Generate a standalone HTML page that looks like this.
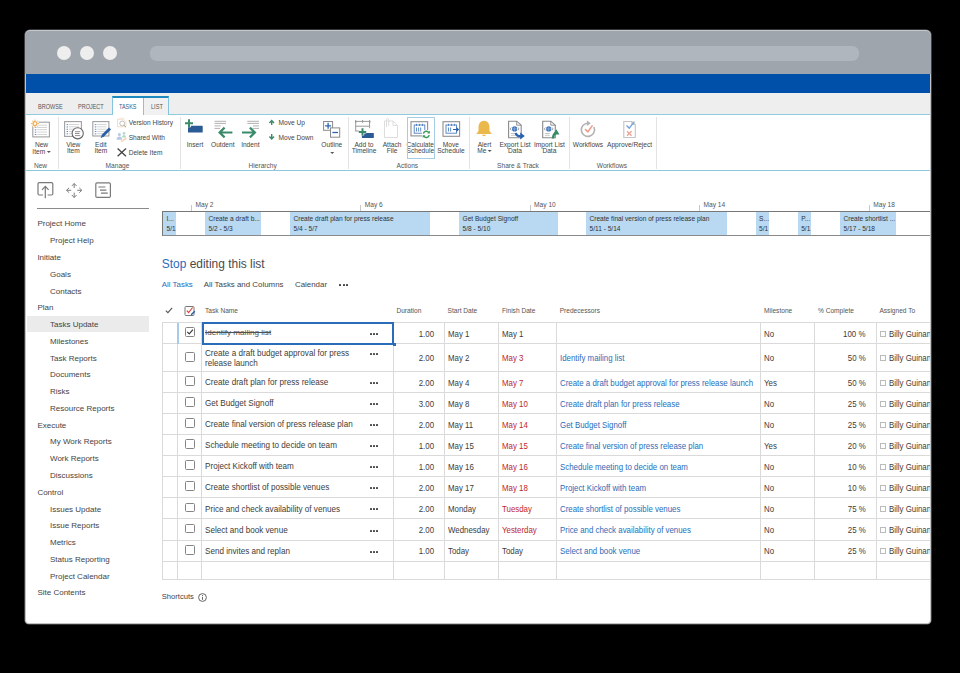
<!DOCTYPE html>
<html><head><meta charset="utf-8">
<style>
html,body{margin:0;padding:0;}
body{width:960px;height:673px;background:#000;position:relative;overflow:hidden;font-family:"Liberation Sans",sans-serif;}
.t{position:absolute;white-space:nowrap;line-height:1.117;}
.r{position:absolute;}
svg{position:absolute;overflow:visible;}
</style></head><body>

<div class="r" style="left:25px;top:30px;width:906px;height:594px;background:#ffffff;border-radius:5px 5px 4px 4px;"></div>
<div style="position:absolute;left:0;top:0;width:931px;height:673px;overflow:hidden;">
<div class="r" style="left:25px;top:30px;width:906px;height:44px;background:#9fa5ac;border-radius:5px 5px 0 0;box-shadow:inset 0 1px 0 #c4c8cc;"></div>
<div class="r" style="left:57px;top:46px;width:14px;height:14px;background:#eeeeee;border-radius:50%;"></div>
<div class="r" style="left:80px;top:46px;width:14px;height:14px;background:#eeeeee;border-radius:50%;"></div>
<div class="r" style="left:103px;top:46px;width:14px;height:14px;background:#eeeeee;border-radius:50%;"></div>
<div class="r" style="left:150.3px;top:45.6px;width:708.7px;height:15.3px;background:#afb6bd;border-radius:6.5px;"></div>
<div class="r" style="left:25px;top:74px;width:906px;height:19px;background:#004fa9;"></div>
<div class="r" style="left:25px;top:93px;width:906px;height:21px;background:#eeeeee;"></div>
<div class="r" style="left:25px;top:114px;width:906px;height:1px;background:#92cbe0;"></div>
<div class="r" style="left:25px;top:170px;width:906px;height:1.2px;background:#8fc8dd;"></div>
<div class="r" style="left:112px;top:95.5px;width:57px;height:19px;background:#f1f1f1;box-sizing:border-box;border:1px solid #86c3df;border-top:2px solid #1e88bf;border-bottom:none;"></div>
<div class="r" style="left:113px;top:97.5px;width:30px;height:18px;background:#ffffff;"></div>
<div class="r" style="left:143px;top:97.5px;width:1px;height:17px;background:#86c3df;"></div>
<div class="t" style="left:37.5px;top:103.18px;font-size:7.2px;color:#555;transform:scaleX(0.77);transform-origin:0 0;">BROWSE</div>
<div class="t" style="left:77.8px;top:103.18px;font-size:7.2px;color:#555;transform:scaleX(0.765);transform-origin:0 0;">PROJECT</div>
<div class="t" style="left:118.8px;top:103.18px;font-size:7.2px;color:#2b5f86;transform:scaleX(0.755);transform-origin:0 0;">TASKS</div>
<div class="t" style="left:150.5px;top:103.18px;font-size:7.2px;color:#555;transform:scaleX(0.78);transform-origin:0 0;">LIST</div>
<div class="r" style="left:57.5px;top:117px;width:1px;height:52px;background:#e3e3e3;"></div>
<div class="r" style="left:179.5px;top:117px;width:1px;height:52px;background:#e3e3e3;"></div>
<div class="r" style="left:347.5px;top:117px;width:1px;height:52px;background:#e3e3e3;"></div>
<div class="r" style="left:468.5px;top:117px;width:1px;height:52px;background:#e3e3e3;"></div>
<div class="r" style="left:568.5px;top:117px;width:1px;height:52px;background:#e3e3e3;"></div>
<div class="r" style="left:656px;top:117px;width:1px;height:52px;background:#e3e3e3;"></div>
<div class="t " style="left:40.5px;top:161.61px;font-size:6.6px;color:#555;transform:translateX(-50%);">New</div>
<div class="t " style="left:117.5px;top:161.61px;font-size:6.6px;color:#555;transform:translateX(-50%);">Manage</div>
<div class="t " style="left:262.7px;top:161.61px;font-size:6.6px;color:#555;transform:translateX(-50%);">Hierarchy</div>
<div class="t " style="left:407.3px;top:161.61px;font-size:6.6px;color:#555;transform:translateX(-50%);">Actions</div>
<div class="t " style="left:518px;top:161.61px;font-size:6.6px;color:#555;transform:translateX(-50%);">Share &amp; Track</div>
<div class="t " style="left:612px;top:161.61px;font-size:6.6px;color:#555;transform:translateX(-50%);">Workflows</div>
<div class="t " style="left:41.5px;top:141.31px;font-size:6.6px;color:#444;transform:translateX(-50%);">New</div>
<div class="t " style="left:41.5px;top:147.61px;font-size:6.6px;color:#444;transform:translateX(-50%);">Item<span style="display:inline-block;width:0;height:0;border-left:2px solid transparent;border-right:2px solid transparent;border-top:2.2px solid #555;vertical-align:1px;margin-left:1.5px"></span></div>
<div class="t " style="left:73.3px;top:140.71px;font-size:6.6px;color:#444;transform:translateX(-50%);">View</div>
<div class="t " style="left:73.3px;top:146.91px;font-size:6.6px;color:#444;transform:translateX(-50%);">Item</div>
<div class="t " style="left:100.8px;top:140.71px;font-size:6.6px;color:#444;transform:translateX(-50%);">Edit</div>
<div class="t " style="left:100.8px;top:146.91px;font-size:6.6px;color:#444;transform:translateX(-50%);">Item</div>
<div class="t " style="left:195px;top:140.71px;font-size:6.6px;color:#444;transform:translateX(-50%);">Insert</div>
<div class="t " style="left:222.8px;top:140.71px;font-size:6.6px;color:#444;transform:translateX(-50%);">Outdent</div>
<div class="t " style="left:250.3px;top:140.71px;font-size:6.6px;color:#444;transform:translateX(-50%);">Indent</div>
<div class="t " style="left:331.8px;top:140.51px;font-size:6.6px;color:#444;transform:translateX(-50%);">Outline</div>
<div class="t " style="left:331.8px;top:149.11px;font-size:6.6px;color:#444;transform:translateX(-50%);"><span style="display:inline-block;width:0;height:0;border-left:2px solid transparent;border-right:2px solid transparent;border-top:2.2px solid #555;vertical-align:1px;margin-left:1.5px"></span></div>
<div class="t " style="left:364px;top:140.71px;font-size:6.6px;color:#444;transform:translateX(-50%);">Add to</div>
<div class="t " style="left:364px;top:146.91px;font-size:6.6px;color:#444;transform:translateX(-50%);">Timeline</div>
<div class="t " style="left:392px;top:140.71px;font-size:6.6px;color:#444;transform:translateX(-50%);">Attach</div>
<div class="t " style="left:392px;top:146.91px;font-size:6.6px;color:#444;transform:translateX(-50%);">File</div>
<div class="t " style="left:420.3px;top:140.71px;font-size:6.6px;color:#444;transform:translateX(-50%);">Calculate</div>
<div class="t " style="left:420.3px;top:146.91px;font-size:6.6px;color:#444;transform:translateX(-50%);">Schedule</div>
<div class="t " style="left:450.9px;top:140.71px;font-size:6.6px;color:#444;transform:translateX(-50%);">Move</div>
<div class="t " style="left:450.9px;top:146.91px;font-size:6.6px;color:#444;transform:translateX(-50%);">Schedule</div>
<div class="t " style="left:484.5px;top:140.71px;font-size:6.6px;color:#444;transform:translateX(-50%);">Alert</div>
<div class="t " style="left:484.5px;top:146.91px;font-size:6.6px;color:#444;transform:translateX(-50%);">Me<span style="display:inline-block;width:0;height:0;border-left:2px solid transparent;border-right:2px solid transparent;border-top:2.2px solid #555;vertical-align:1px;margin-left:1.5px"></span></div>
<div class="t " style="left:515px;top:140.71px;font-size:6.6px;color:#444;transform:translateX(-50%);">Export List</div>
<div class="t " style="left:515px;top:146.91px;font-size:6.6px;color:#444;transform:translateX(-50%);">Data</div>
<div class="t " style="left:549.4px;top:140.71px;font-size:6.6px;color:#444;transform:translateX(-50%);">Import List</div>
<div class="t " style="left:549.4px;top:146.91px;font-size:6.6px;color:#444;transform:translateX(-50%);">Data</div>
<div class="t " style="left:588px;top:140.71px;font-size:6.6px;color:#444;transform:translateX(-50%);">Workflows</div>
<div class="t " style="left:629.6px;top:140.71px;font-size:6.6px;color:#444;transform:translateX(-50%);">Approve/Reject</div>
<div class="t " style="left:128.7px;top:118.81px;font-size:6.6px;color:#444;">Version History</div>
<div class="t " style="left:128.7px;top:133.81px;font-size:6.6px;color:#444;">Shared With</div>
<div class="t " style="left:128.7px;top:148.81px;font-size:6.6px;color:#444;">Delete Item</div>
<div class="t " style="left:278.6px;top:119.01px;font-size:6.6px;color:#444;">Move Up</div>
<div class="t " style="left:278.6px;top:133.71px;font-size:6.6px;color:#444;">Move Down</div>
<div class="r" style="left:406.5px;top:116.5px;width:28px;height:42px;background:transparent;box-sizing:border-box;border:1px solid #a6cde6;"></div>
<div class="r" style="left:37px;top:208px;width:112px;height:1px;background:#8a8a8a;"></div>
<div class="r" style="left:27px;top:316px;width:122px;height:16px;background:#ebebeb;"></div>
<div class="t " style="left:37.4px;top:220.43px;font-size:8px;color:#444;">Project Home</div>
<div class="t " style="left:50px;top:237.20px;font-size:8px;color:#444;">Project Help</div>
<div class="t " style="left:37.4px;top:253.97px;font-size:8px;color:#444;">Initiate</div>
<div class="t " style="left:50px;top:270.74px;font-size:8px;color:#444;">Goals</div>
<div class="t " style="left:50px;top:287.51px;font-size:8px;color:#444;">Contacts</div>
<div class="t " style="left:37.4px;top:304.28px;font-size:8px;color:#444;">Plan</div>
<div class="t " style="left:50px;top:321.05px;font-size:8px;color:#444;">Tasks Update</div>
<div class="t " style="left:50px;top:337.82px;font-size:8px;color:#444;">Milestones</div>
<div class="t " style="left:50px;top:354.59px;font-size:8px;color:#444;">Task Reports</div>
<div class="t " style="left:50px;top:371.36px;font-size:8px;color:#444;">Documents</div>
<div class="t " style="left:50px;top:388.13px;font-size:8px;color:#444;">Risks</div>
<div class="t " style="left:50px;top:404.90px;font-size:8px;color:#444;">Resource Reports</div>
<div class="t " style="left:37.4px;top:421.67px;font-size:8px;color:#444;">Execute</div>
<div class="t " style="left:50px;top:438.44px;font-size:8px;color:#444;">My Work Reports</div>
<div class="t " style="left:50px;top:455.21px;font-size:8px;color:#444;">Work Reports</div>
<div class="t " style="left:50px;top:471.98px;font-size:8px;color:#444;">Discussions</div>
<div class="t " style="left:37.4px;top:488.75px;font-size:8px;color:#444;">Control</div>
<div class="t " style="left:50px;top:505.52px;font-size:8px;color:#444;">Issues Update</div>
<div class="t " style="left:50px;top:522.29px;font-size:8px;color:#444;">Issue Reports</div>
<div class="t " style="left:50px;top:539.06px;font-size:8px;color:#444;">Metrics</div>
<div class="t " style="left:50px;top:555.83px;font-size:8px;color:#444;">Status Reporting</div>
<div class="t " style="left:50px;top:572.60px;font-size:8px;color:#444;">Project Calendar</div>
<div class="t " style="left:37.4px;top:589.37px;font-size:8px;color:#444;">Site Contents</div>
<div class="r" style="left:161.5px;top:210.8px;width:770px;height:25.2px;background:#ffffff;box-sizing:border-box;border:1.4px solid #777;border-right:none;border-bottom:1.6px solid #8a8a8a;"></div>
<div class="r" style="left:163px;top:212.2px;width:13px;height:22.8px;background:#b8d9f1;overflow:hidden;"><div class="t" style="left:3.5px;top:3.11px;font-size:6.6px;color:#333;">I...</div><div class="t" style="left:3.5px;top:13.11px;font-size:6.6px;color:#333;">5/1</div></div>
<div class="r" style="left:205px;top:212.2px;width:56px;height:22.8px;background:#b8d9f1;overflow:hidden;"><div class="t" style="left:3.5px;top:3.11px;font-size:6.6px;color:#333;">Create a draft b...</div><div class="t" style="left:3.5px;top:13.11px;font-size:6.6px;color:#333;">5/2 - 5/3</div></div>
<div class="r" style="left:290px;top:212.2px;width:140px;height:22.8px;background:#b8d9f1;overflow:hidden;"><div class="t" style="left:3.5px;top:3.11px;font-size:6.6px;color:#333;">Create draft plan for press release</div><div class="t" style="left:3.5px;top:13.11px;font-size:6.6px;color:#333;">5/4 - 5/7</div></div>
<div class="r" style="left:459px;top:212.2px;width:99px;height:22.8px;background:#b8d9f1;overflow:hidden;"><div class="t" style="left:3.5px;top:3.11px;font-size:6.6px;color:#333;">Get Budget Signoff</div><div class="t" style="left:3.5px;top:13.11px;font-size:6.6px;color:#333;">5/8 - 5/10</div></div>
<div class="r" style="left:586px;top:212.2px;width:141px;height:22.8px;background:#b8d9f1;overflow:hidden;"><div class="t" style="left:3.5px;top:3.11px;font-size:6.6px;color:#333;">Create final version of press release plan</div><div class="t" style="left:3.5px;top:13.11px;font-size:6.6px;color:#333;">5/11 - 5/14</div></div>
<div class="r" style="left:755.6px;top:212.2px;width:13.399999999999977px;height:22.8px;background:#b8d9f1;overflow:hidden;"><div class="t" style="left:3.5px;top:3.11px;font-size:6.6px;color:#333;">S...</div><div class="t" style="left:3.5px;top:13.11px;font-size:6.6px;color:#333;">5/1</div></div>
<div class="r" style="left:797.7px;top:212.2px;width:13.299999999999955px;height:22.8px;background:#b8d9f1;overflow:hidden;"><div class="t" style="left:3.5px;top:3.11px;font-size:6.6px;color:#333;">P...</div><div class="t" style="left:3.5px;top:13.11px;font-size:6.6px;color:#333;">5/1</div></div>
<div class="r" style="left:840px;top:212.2px;width:56px;height:22.8px;background:#b8d9f1;overflow:hidden;"><div class="t" style="left:3.5px;top:3.11px;font-size:6.6px;color:#333;">Create shortlist ...</div><div class="t" style="left:3.5px;top:13.11px;font-size:6.6px;color:#333;">5/17 - 5/18</div></div>
<div class="r" style="left:191px;top:205px;width:1px;height:6px;background:#c8c8c8;"></div>
<div class="t " style="left:195.5px;top:201.01px;font-size:6.6px;color:#555;">May 2</div>
<div class="r" style="left:360.3px;top:205px;width:1px;height:6px;background:#c8c8c8;"></div>
<div class="t " style="left:364.8px;top:201.01px;font-size:6.6px;color:#555;">May 6</div>
<div class="r" style="left:529.6px;top:205px;width:1px;height:6px;background:#c8c8c8;"></div>
<div class="t " style="left:534.1px;top:201.01px;font-size:6.6px;color:#555;">May 10</div>
<div class="r" style="left:699px;top:205px;width:1px;height:6px;background:#c8c8c8;"></div>
<div class="t " style="left:703.5px;top:201.01px;font-size:6.6px;color:#555;">May 14</div>
<div class="r" style="left:868.8px;top:205px;width:1px;height:6px;background:#c8c8c8;"></div>
<div class="t " style="left:873.3px;top:201.01px;font-size:6.6px;color:#555;">May 18</div>
<div class="t " style="left:161.8px;top:258.33px;font-size:11.95px;color:#4a4a4a;"><span style="color:#2a6cb8">Stop</span> editing this list</div>
<div class="t " style="left:161.8px;top:281.19px;font-size:7.9px;color:#2a6cb8;">All Tasks</div>
<div class="t " style="left:203.8px;top:281.19px;font-size:7.9px;color:#444;">All Tasks and Columns</div>
<div class="t " style="left:295px;top:281.19px;font-size:7.9px;color:#444;">Calendar</div>
<div class="r" style="left:339.3px;top:284px;width:2.1px;height:2.1px;background:#444;border-radius:0.6px;"></div>
<div class="r" style="left:342.6px;top:284px;width:2.1px;height:2.1px;background:#444;border-radius:0.6px;"></div>
<div class="r" style="left:345.90000000000003px;top:284px;width:2.1px;height:2.1px;background:#444;border-radius:0.6px;"></div>
<div class="r" style="left:162px;top:322.0px;width:769px;height:1px;background:#dadada;"></div>
<div class="r" style="left:162px;top:343.1px;width:769px;height:1px;background:#dadada;"></div>
<div class="r" style="left:162px;top:370.8px;width:769px;height:1px;background:#dadada;"></div>
<div class="r" style="left:162px;top:391.8px;width:769px;height:1px;background:#dadada;"></div>
<div class="r" style="left:162px;top:412.8px;width:769px;height:1px;background:#dadada;"></div>
<div class="r" style="left:162px;top:433.8px;width:769px;height:1px;background:#dadada;"></div>
<div class="r" style="left:162px;top:454.9px;width:769px;height:1px;background:#dadada;"></div>
<div class="r" style="left:162px;top:476.0px;width:769px;height:1px;background:#dadada;"></div>
<div class="r" style="left:162px;top:497.2px;width:769px;height:1px;background:#dadada;"></div>
<div class="r" style="left:162px;top:518.3px;width:769px;height:1px;background:#dadada;"></div>
<div class="r" style="left:162px;top:539.5px;width:769px;height:1px;background:#dadada;"></div>
<div class="r" style="left:162px;top:560.6px;width:769px;height:1px;background:#dadada;"></div>
<div class="r" style="left:162px;top:578.8px;width:769px;height:1px;background:#dadada;"></div>
<div class="r" style="left:161.5px;top:322px;width:1px;height:257.8px;background:#dadada;"></div>
<div class="r" style="left:177.4px;top:322px;width:1px;height:257.8px;background:#dadada;"></div>
<div class="r" style="left:201.1px;top:322px;width:1px;height:257.8px;background:#dadada;"></div>
<div class="r" style="left:393.3px;top:322px;width:1px;height:257.8px;background:#dadada;"></div>
<div class="r" style="left:443.5px;top:322px;width:1px;height:257.8px;background:#dadada;"></div>
<div class="r" style="left:498.3px;top:322px;width:1px;height:257.8px;background:#dadada;"></div>
<div class="r" style="left:556.0px;top:322px;width:1px;height:257.8px;background:#dadada;"></div>
<div class="r" style="left:760.1px;top:322px;width:1px;height:257.8px;background:#dadada;"></div>
<div class="r" style="left:813.8px;top:322px;width:1px;height:257.8px;background:#dadada;"></div>
<div class="r" style="left:875.8px;top:322px;width:1px;height:257.8px;background:#dadada;"></div>
<svg style="left:165px;top:307px" width="8" height="7" viewBox="0 0 8 7"><path d="M0.8 3.6L2.9 5.7L7.2 0.9" fill="none" stroke="#555" stroke-width="1.1"/></svg>
<svg style="left:184px;top:304.5px" width="12" height="12" viewBox="0 0 12 12"><rect x="1" y="1.5" width="9" height="9" rx="1" fill="#fff" stroke="#777" stroke-width="1"/><path d="M2.8 5.6L4.6 7.5L8.6 2.5" fill="none" stroke="#e0463c" stroke-width="1.2"/><path d="M6.5 10.8L7.2 8.8L10.3 5.7L11.3 6.7L8.2 9.8Z" fill="#2b5fa8"/></svg>
<div class="t " style="left:205px;top:307.01px;font-size:6.6px;color:#555;">Task Name</div>
<div class="t " style="left:396.4px;top:307.01px;font-size:6.6px;color:#555;">Duration</div>
<div class="t " style="left:447.6px;top:307.01px;font-size:6.6px;color:#555;">Start Date</div>
<div class="t " style="left:502px;top:307.01px;font-size:6.6px;color:#555;">Finish Date</div>
<div class="t " style="left:559.7px;top:307.01px;font-size:6.6px;color:#555;">Predecessors</div>
<div class="t " style="left:764px;top:307.01px;font-size:6.6px;color:#555;">Milestone</div>
<div class="t " style="left:818px;top:307.01px;font-size:6.6px;color:#555;">% Complete</div>
<div class="t " style="left:879.4px;top:307.01px;font-size:6.6px;color:#555;">Assigned To</div>
<div class="t " style="left:205px;top:328.08px;font-size:8.1px;color:#505050;text-decoration:line-through;">Identify mailing list</div>
<div class="r" style="left:370px;top:333px;width:1.8px;height:1.8px;background:#4a4a4a;border-radius:0.5px;"></div>
<div class="r" style="left:373px;top:333px;width:1.8px;height:1.8px;background:#4a4a4a;border-radius:0.5px;"></div>
<div class="r" style="left:376px;top:333px;width:1.8px;height:1.8px;background:#4a4a4a;border-radius:0.5px;"></div>
<div class="t " style="right:497.2px;top:329.94px;font-size:8.25px;color:#3c3c3c;transform:scaleX(0.955);transform-origin:100% 0;">1.00</div>
<div class="t " style="left:447.6px;top:329.94px;font-size:8.25px;color:#3c3c3c;transform:scaleX(0.955);transform-origin:0 0;">May 1</div>
<div class="t " style="left:502px;top:329.94px;font-size:8.25px;color:#3c3c3c;transform:scaleX(0.955);transform-origin:0 0;">May 1</div>
<div class="t " style="left:764px;top:329.94px;font-size:8.25px;color:#3c3c3c;transform:scaleX(0.955);transform-origin:0 0;">No</div>
<div class="t " style="right:65.29999999999995px;top:329.94px;font-size:8.25px;color:#3c3c3c;transform:scaleX(0.955);transform-origin:100% 0;">100 %</div>
<div class="r" style="left:880px;top:330.95px;width:6px;height:6px;background:#fff;box-sizing:border-box;border:1px solid #bbb;"></div>
<div class="t " style="left:889px;top:329.94px;font-size:8.25px;color:#3c3c3c;transform:scaleX(0.955);transform-origin:0 0;">Billy Guinan</div>
<div class="r" style="left:185px;top:327.35px;width:10px;height:9.8px;background:#fff;box-sizing:border-box;border:1.2px solid #858585;border-radius:1.5px;"></div>
<div class="t " style="left:205px;top:349.49px;font-size:8.25px;color:#3c3c3c;transform:scaleX(0.985);transform-origin:0 0;">Create a draft budget approval for press</div>
<div class="t " style="left:205px;top:359.49px;font-size:8.25px;color:#3c3c3c;transform:scaleX(0.985);transform-origin:0 0;">release launch</div>
<div class="r" style="left:370px;top:353px;width:1.8px;height:1.8px;background:#4a4a4a;border-radius:0.5px;"></div>
<div class="r" style="left:373px;top:353px;width:1.8px;height:1.8px;background:#4a4a4a;border-radius:0.5px;"></div>
<div class="r" style="left:376px;top:353px;width:1.8px;height:1.8px;background:#4a4a4a;border-radius:0.5px;"></div>
<div class="t " style="right:497.2px;top:354.34px;font-size:8.25px;color:#3c3c3c;transform:scaleX(0.955);transform-origin:100% 0;">2.00</div>
<div class="t " style="left:447.6px;top:354.34px;font-size:8.25px;color:#3c3c3c;transform:scaleX(0.955);transform-origin:0 0;">May 2</div>
<div class="t " style="left:502px;top:354.34px;font-size:8.25px;color:#c0272d;transform:scaleX(0.955);transform-origin:0 0;">May 3</div>
<div class="t " style="left:559.7px;top:354.34px;font-size:8.25px;color:#2a6cb8;transform:scaleX(0.955);transform-origin:0 0;">Identify mailing list</div>
<div class="t " style="left:764px;top:354.34px;font-size:8.25px;color:#3c3c3c;transform:scaleX(0.955);transform-origin:0 0;">No</div>
<div class="t " style="right:65.29999999999995px;top:354.34px;font-size:8.25px;color:#3c3c3c;transform:scaleX(0.955);transform-origin:100% 0;">50 %</div>
<div class="r" style="left:880px;top:355.35px;width:6px;height:6px;background:#fff;box-sizing:border-box;border:1px solid #bbb;"></div>
<div class="t " style="left:889px;top:354.34px;font-size:8.25px;color:#3c3c3c;transform:scaleX(0.955);transform-origin:0 0;">Billy Guinan</div>
<div class="r" style="left:185px;top:351.8px;width:10px;height:9.8px;background:#fff;box-sizing:border-box;border:1.2px solid #858585;border-radius:1.5px;"></div>
<div class="t " style="left:205px;top:378.09px;font-size:8.25px;color:#3c3c3c;transform:scaleX(0.985);transform-origin:0 0;">Create draft plan for press release</div>
<div class="r" style="left:370px;top:382px;width:1.8px;height:1.8px;background:#4a4a4a;border-radius:0.5px;"></div>
<div class="r" style="left:373px;top:382px;width:1.8px;height:1.8px;background:#4a4a4a;border-radius:0.5px;"></div>
<div class="r" style="left:376px;top:382px;width:1.8px;height:1.8px;background:#4a4a4a;border-radius:0.5px;"></div>
<div class="t " style="right:497.2px;top:378.69px;font-size:8.25px;color:#3c3c3c;transform:scaleX(0.955);transform-origin:100% 0;">2.00</div>
<div class="t " style="left:447.6px;top:378.69px;font-size:8.25px;color:#3c3c3c;transform:scaleX(0.955);transform-origin:0 0;">May 4</div>
<div class="t " style="left:502px;top:378.69px;font-size:8.25px;color:#c0272d;transform:scaleX(0.955);transform-origin:0 0;">May 7</div>
<div class="t " style="left:559.7px;top:378.69px;font-size:8.25px;color:#2a6cb8;transform:scaleX(0.955);transform-origin:0 0;">Create a draft budget approval for press release launch</div>
<div class="t " style="left:764px;top:378.69px;font-size:8.25px;color:#3c3c3c;transform:scaleX(0.955);transform-origin:0 0;">Yes</div>
<div class="t " style="right:65.29999999999995px;top:378.69px;font-size:8.25px;color:#3c3c3c;transform:scaleX(0.955);transform-origin:100% 0;">50 %</div>
<div class="r" style="left:880px;top:379.7px;width:6px;height:6px;background:#fff;box-sizing:border-box;border:1px solid #bbb;"></div>
<div class="t " style="left:889px;top:378.69px;font-size:8.25px;color:#3c3c3c;transform:scaleX(0.955);transform-origin:0 0;">Billy Guinan</div>
<div class="r" style="left:185px;top:376.1px;width:10px;height:9.8px;background:#fff;box-sizing:border-box;border:1.2px solid #858585;border-radius:1.5px;"></div>
<div class="t " style="left:205px;top:399.09px;font-size:8.25px;color:#3c3c3c;transform:scaleX(0.985);transform-origin:0 0;">Get Budget Signoff</div>
<div class="r" style="left:370px;top:403px;width:1.8px;height:1.8px;background:#4a4a4a;border-radius:0.5px;"></div>
<div class="r" style="left:373px;top:403px;width:1.8px;height:1.8px;background:#4a4a4a;border-radius:0.5px;"></div>
<div class="r" style="left:376px;top:403px;width:1.8px;height:1.8px;background:#4a4a4a;border-radius:0.5px;"></div>
<div class="t " style="right:497.2px;top:399.69px;font-size:8.25px;color:#3c3c3c;transform:scaleX(0.955);transform-origin:100% 0;">3.00</div>
<div class="t " style="left:447.6px;top:399.69px;font-size:8.25px;color:#3c3c3c;transform:scaleX(0.955);transform-origin:0 0;">May 8</div>
<div class="t " style="left:502px;top:399.69px;font-size:8.25px;color:#c0272d;transform:scaleX(0.955);transform-origin:0 0;">May 10</div>
<div class="t " style="left:559.7px;top:399.69px;font-size:8.25px;color:#2a6cb8;transform:scaleX(0.955);transform-origin:0 0;">Create draft plan for press release</div>
<div class="t " style="left:764px;top:399.69px;font-size:8.25px;color:#3c3c3c;transform:scaleX(0.955);transform-origin:0 0;">No</div>
<div class="t " style="right:65.29999999999995px;top:399.69px;font-size:8.25px;color:#3c3c3c;transform:scaleX(0.955);transform-origin:100% 0;">25 %</div>
<div class="r" style="left:880px;top:400.7px;width:6px;height:6px;background:#fff;box-sizing:border-box;border:1px solid #bbb;"></div>
<div class="t " style="left:889px;top:399.69px;font-size:8.25px;color:#3c3c3c;transform:scaleX(0.955);transform-origin:0 0;">Billy Guinan</div>
<div class="r" style="left:185px;top:397.1px;width:10px;height:9.8px;background:#fff;box-sizing:border-box;border:1.2px solid #858585;border-radius:1.5px;"></div>
<div class="t " style="left:205px;top:420.09px;font-size:8.25px;color:#3c3c3c;transform:scaleX(0.985);transform-origin:0 0;">Create final version of press release plan</div>
<div class="r" style="left:370px;top:424px;width:1.8px;height:1.8px;background:#4a4a4a;border-radius:0.5px;"></div>
<div class="r" style="left:373px;top:424px;width:1.8px;height:1.8px;background:#4a4a4a;border-radius:0.5px;"></div>
<div class="r" style="left:376px;top:424px;width:1.8px;height:1.8px;background:#4a4a4a;border-radius:0.5px;"></div>
<div class="t " style="right:497.2px;top:420.69px;font-size:8.25px;color:#3c3c3c;transform:scaleX(0.955);transform-origin:100% 0;">2.00</div>
<div class="t " style="left:447.6px;top:420.69px;font-size:8.25px;color:#3c3c3c;transform:scaleX(0.955);transform-origin:0 0;">May 11</div>
<div class="t " style="left:502px;top:420.69px;font-size:8.25px;color:#c0272d;transform:scaleX(0.955);transform-origin:0 0;">May 14</div>
<div class="t " style="left:559.7px;top:420.69px;font-size:8.25px;color:#2a6cb8;transform:scaleX(0.955);transform-origin:0 0;">Get Budget Signoff</div>
<div class="t " style="left:764px;top:420.69px;font-size:8.25px;color:#3c3c3c;transform:scaleX(0.955);transform-origin:0 0;">No</div>
<div class="t " style="right:65.29999999999995px;top:420.69px;font-size:8.25px;color:#3c3c3c;transform:scaleX(0.955);transform-origin:100% 0;">25 %</div>
<div class="r" style="left:880px;top:421.7px;width:6px;height:6px;background:#fff;box-sizing:border-box;border:1px solid #bbb;"></div>
<div class="t " style="left:889px;top:420.69px;font-size:8.25px;color:#3c3c3c;transform:scaleX(0.955);transform-origin:0 0;">Billy Guinan</div>
<div class="r" style="left:185px;top:418.1px;width:10px;height:9.8px;background:#fff;box-sizing:border-box;border:1.2px solid #858585;border-radius:1.5px;"></div>
<div class="t " style="left:205px;top:441.14px;font-size:8.25px;color:#3c3c3c;transform:scaleX(0.985);transform-origin:0 0;">Schedule meeting to decide on team</div>
<div class="r" style="left:370px;top:445px;width:1.8px;height:1.8px;background:#4a4a4a;border-radius:0.5px;"></div>
<div class="r" style="left:373px;top:445px;width:1.8px;height:1.8px;background:#4a4a4a;border-radius:0.5px;"></div>
<div class="r" style="left:376px;top:445px;width:1.8px;height:1.8px;background:#4a4a4a;border-radius:0.5px;"></div>
<div class="t " style="right:497.2px;top:441.74px;font-size:8.25px;color:#3c3c3c;transform:scaleX(0.955);transform-origin:100% 0;">1.00</div>
<div class="t " style="left:447.6px;top:441.74px;font-size:8.25px;color:#3c3c3c;transform:scaleX(0.955);transform-origin:0 0;">May 15</div>
<div class="t " style="left:502px;top:441.74px;font-size:8.25px;color:#c0272d;transform:scaleX(0.955);transform-origin:0 0;">May 15</div>
<div class="t " style="left:559.7px;top:441.74px;font-size:8.25px;color:#2a6cb8;transform:scaleX(0.955);transform-origin:0 0;">Create final version of press release plan</div>
<div class="t " style="left:764px;top:441.74px;font-size:8.25px;color:#3c3c3c;transform:scaleX(0.955);transform-origin:0 0;">Yes</div>
<div class="t " style="right:65.29999999999995px;top:441.74px;font-size:8.25px;color:#3c3c3c;transform:scaleX(0.955);transform-origin:100% 0;">20 %</div>
<div class="r" style="left:880px;top:442.75px;width:6px;height:6px;background:#fff;box-sizing:border-box;border:1px solid #bbb;"></div>
<div class="t " style="left:889px;top:441.74px;font-size:8.25px;color:#3c3c3c;transform:scaleX(0.955);transform-origin:0 0;">Billy Guinan</div>
<div class="r" style="left:185px;top:439.15000000000003px;width:10px;height:9.8px;background:#fff;box-sizing:border-box;border:1.2px solid #858585;border-radius:1.5px;"></div>
<div class="t " style="left:205px;top:462.24px;font-size:8.25px;color:#3c3c3c;transform:scaleX(0.985);transform-origin:0 0;">Project Kickoff with team</div>
<div class="r" style="left:370px;top:466px;width:1.8px;height:1.8px;background:#4a4a4a;border-radius:0.5px;"></div>
<div class="r" style="left:373px;top:466px;width:1.8px;height:1.8px;background:#4a4a4a;border-radius:0.5px;"></div>
<div class="r" style="left:376px;top:466px;width:1.8px;height:1.8px;background:#4a4a4a;border-radius:0.5px;"></div>
<div class="t " style="right:497.2px;top:462.84px;font-size:8.25px;color:#3c3c3c;transform:scaleX(0.955);transform-origin:100% 0;">1.00</div>
<div class="t " style="left:447.6px;top:462.84px;font-size:8.25px;color:#3c3c3c;transform:scaleX(0.955);transform-origin:0 0;">May 16</div>
<div class="t " style="left:502px;top:462.84px;font-size:8.25px;color:#c0272d;transform:scaleX(0.955);transform-origin:0 0;">May 16</div>
<div class="t " style="left:559.7px;top:462.84px;font-size:8.25px;color:#2a6cb8;transform:scaleX(0.955);transform-origin:0 0;">Schedule meeting to decide on team</div>
<div class="t " style="left:764px;top:462.84px;font-size:8.25px;color:#3c3c3c;transform:scaleX(0.955);transform-origin:0 0;">No</div>
<div class="t " style="right:65.29999999999995px;top:462.84px;font-size:8.25px;color:#3c3c3c;transform:scaleX(0.955);transform-origin:100% 0;">10 %</div>
<div class="r" style="left:880px;top:463.84999999999997px;width:6px;height:6px;background:#fff;box-sizing:border-box;border:1px solid #bbb;"></div>
<div class="t " style="left:889px;top:462.84px;font-size:8.25px;color:#3c3c3c;transform:scaleX(0.955);transform-origin:0 0;">Billy Guinan</div>
<div class="r" style="left:185px;top:460.25px;width:10px;height:9.8px;background:#fff;box-sizing:border-box;border:1.2px solid #858585;border-radius:1.5px;"></div>
<div class="t " style="left:205px;top:483.39px;font-size:8.25px;color:#3c3c3c;transform:scaleX(0.985);transform-origin:0 0;">Create shortlist of possible venues</div>
<div class="r" style="left:370px;top:487px;width:1.8px;height:1.8px;background:#4a4a4a;border-radius:0.5px;"></div>
<div class="r" style="left:373px;top:487px;width:1.8px;height:1.8px;background:#4a4a4a;border-radius:0.5px;"></div>
<div class="r" style="left:376px;top:487px;width:1.8px;height:1.8px;background:#4a4a4a;border-radius:0.5px;"></div>
<div class="t " style="right:497.2px;top:483.99px;font-size:8.25px;color:#3c3c3c;transform:scaleX(0.955);transform-origin:100% 0;">2.00</div>
<div class="t " style="left:447.6px;top:483.99px;font-size:8.25px;color:#3c3c3c;transform:scaleX(0.955);transform-origin:0 0;">May 17</div>
<div class="t " style="left:502px;top:483.99px;font-size:8.25px;color:#c0272d;transform:scaleX(0.955);transform-origin:0 0;">May 18</div>
<div class="t " style="left:559.7px;top:483.99px;font-size:8.25px;color:#2a6cb8;transform:scaleX(0.955);transform-origin:0 0;">Project Kickoff with team</div>
<div class="t " style="left:764px;top:483.99px;font-size:8.25px;color:#3c3c3c;transform:scaleX(0.955);transform-origin:0 0;">No</div>
<div class="t " style="right:65.29999999999995px;top:483.99px;font-size:8.25px;color:#3c3c3c;transform:scaleX(0.955);transform-origin:100% 0;">10 %</div>
<div class="r" style="left:880px;top:485.0px;width:6px;height:6px;background:#fff;box-sizing:border-box;border:1px solid #bbb;"></div>
<div class="t " style="left:889px;top:483.99px;font-size:8.25px;color:#3c3c3c;transform:scaleX(0.955);transform-origin:0 0;">Billy Guinan</div>
<div class="r" style="left:185px;top:481.40000000000003px;width:10px;height:9.8px;background:#fff;box-sizing:border-box;border:1.2px solid #858585;border-radius:1.5px;"></div>
<div class="t " style="left:205px;top:504.54px;font-size:8.25px;color:#3c3c3c;transform:scaleX(0.985);transform-origin:0 0;">Price and check availability of venues</div>
<div class="r" style="left:370px;top:508px;width:1.8px;height:1.8px;background:#4a4a4a;border-radius:0.5px;"></div>
<div class="r" style="left:373px;top:508px;width:1.8px;height:1.8px;background:#4a4a4a;border-radius:0.5px;"></div>
<div class="r" style="left:376px;top:508px;width:1.8px;height:1.8px;background:#4a4a4a;border-radius:0.5px;"></div>
<div class="t " style="right:497.2px;top:505.14px;font-size:8.25px;color:#3c3c3c;transform:scaleX(0.955);transform-origin:100% 0;">2.00</div>
<div class="t " style="left:447.6px;top:505.14px;font-size:8.25px;color:#3c3c3c;transform:scaleX(0.955);transform-origin:0 0;">Monday</div>
<div class="t " style="left:502px;top:505.14px;font-size:8.25px;color:#c0272d;transform:scaleX(0.955);transform-origin:0 0;">Tuesday</div>
<div class="t " style="left:559.7px;top:505.14px;font-size:8.25px;color:#2a6cb8;transform:scaleX(0.955);transform-origin:0 0;">Create shortlist of possible venues</div>
<div class="t " style="left:764px;top:505.14px;font-size:8.25px;color:#3c3c3c;transform:scaleX(0.955);transform-origin:0 0;">No</div>
<div class="t " style="right:65.29999999999995px;top:505.14px;font-size:8.25px;color:#3c3c3c;transform:scaleX(0.955);transform-origin:100% 0;">75 %</div>
<div class="r" style="left:880px;top:506.15px;width:6px;height:6px;background:#fff;box-sizing:border-box;border:1px solid #bbb;"></div>
<div class="t " style="left:889px;top:505.14px;font-size:8.25px;color:#3c3c3c;transform:scaleX(0.955);transform-origin:0 0;">Billy Guinan</div>
<div class="r" style="left:185px;top:502.55px;width:10px;height:9.8px;background:#fff;box-sizing:border-box;border:1.2px solid #858585;border-radius:1.5px;"></div>
<div class="t " style="left:205px;top:525.69px;font-size:8.25px;color:#3c3c3c;transform:scaleX(0.985);transform-origin:0 0;">Select and book venue</div>
<div class="r" style="left:370px;top:530px;width:1.8px;height:1.8px;background:#4a4a4a;border-radius:0.5px;"></div>
<div class="r" style="left:373px;top:530px;width:1.8px;height:1.8px;background:#4a4a4a;border-radius:0.5px;"></div>
<div class="r" style="left:376px;top:530px;width:1.8px;height:1.8px;background:#4a4a4a;border-radius:0.5px;"></div>
<div class="t " style="right:497.2px;top:526.29px;font-size:8.25px;color:#3c3c3c;transform:scaleX(0.955);transform-origin:100% 0;">2.00</div>
<div class="t " style="left:447.6px;top:526.29px;font-size:8.25px;color:#3c3c3c;transform:scaleX(0.955);transform-origin:0 0;">Wednesday</div>
<div class="t " style="left:502px;top:526.29px;font-size:8.25px;color:#c0272d;transform:scaleX(0.955);transform-origin:0 0;">Yesterday</div>
<div class="t " style="left:559.7px;top:526.29px;font-size:8.25px;color:#2a6cb8;transform:scaleX(0.955);transform-origin:0 0;">Price and check availability of venues</div>
<div class="t " style="left:764px;top:526.29px;font-size:8.25px;color:#3c3c3c;transform:scaleX(0.955);transform-origin:0 0;">No</div>
<div class="t " style="right:65.29999999999995px;top:526.29px;font-size:8.25px;color:#3c3c3c;transform:scaleX(0.955);transform-origin:100% 0;">25 %</div>
<div class="r" style="left:880px;top:527.3px;width:6px;height:6px;background:#fff;box-sizing:border-box;border:1px solid #bbb;"></div>
<div class="t " style="left:889px;top:526.29px;font-size:8.25px;color:#3c3c3c;transform:scaleX(0.955);transform-origin:0 0;">Billy Guinan</div>
<div class="r" style="left:185px;top:523.6999999999999px;width:10px;height:9.8px;background:#fff;box-sizing:border-box;border:1.2px solid #858585;border-radius:1.5px;"></div>
<div class="t " style="left:205px;top:546.84px;font-size:8.25px;color:#3c3c3c;transform:scaleX(0.985);transform-origin:0 0;">Send invites and replan</div>
<div class="r" style="left:370px;top:551px;width:1.8px;height:1.8px;background:#4a4a4a;border-radius:0.5px;"></div>
<div class="r" style="left:373px;top:551px;width:1.8px;height:1.8px;background:#4a4a4a;border-radius:0.5px;"></div>
<div class="r" style="left:376px;top:551px;width:1.8px;height:1.8px;background:#4a4a4a;border-radius:0.5px;"></div>
<div class="t " style="right:497.2px;top:547.44px;font-size:8.25px;color:#3c3c3c;transform:scaleX(0.955);transform-origin:100% 0;">1.00</div>
<div class="t " style="left:447.6px;top:547.44px;font-size:8.25px;color:#3c3c3c;transform:scaleX(0.955);transform-origin:0 0;">Today</div>
<div class="t " style="left:502px;top:547.44px;font-size:8.25px;color:#3c3c3c;transform:scaleX(0.955);transform-origin:0 0;">Today</div>
<div class="t " style="left:559.7px;top:547.44px;font-size:8.25px;color:#2a6cb8;transform:scaleX(0.955);transform-origin:0 0;">Select and book venue</div>
<div class="t " style="left:764px;top:547.44px;font-size:8.25px;color:#3c3c3c;transform:scaleX(0.955);transform-origin:0 0;">No</div>
<div class="t " style="right:65.29999999999995px;top:547.44px;font-size:8.25px;color:#3c3c3c;transform:scaleX(0.955);transform-origin:100% 0;">25 %</div>
<div class="r" style="left:880px;top:548.4499999999999px;width:6px;height:6px;background:#fff;box-sizing:border-box;border:1px solid #bbb;"></div>
<div class="t " style="left:889px;top:547.44px;font-size:8.25px;color:#3c3c3c;transform:scaleX(0.955);transform-origin:0 0;">Billy Guinan</div>
<div class="r" style="left:185px;top:544.8499999999999px;width:10px;height:9.8px;background:#fff;box-sizing:border-box;border:1.2px solid #858585;border-radius:1.5px;"></div>
<svg style="left:185px;top:327.4px" width="10" height="10" viewBox="0 0 10 10"><path d="M2.3 4.9 L4.2 6.9 L7.9 2.7" fill="none" stroke="#3a3a3a" stroke-width="1.15"/></svg>
<div class="r" style="left:177.4px;top:322.8px;width:1.2px;height:21px;background:#a8cbe9;"></div>
<div class="r" style="left:201.5px;top:322px;width:192.6px;height:22.8px;background:transparent;box-sizing:border-box;border:2px solid #2a6cb8;"></div>
<div class="r" style="left:392.5px;top:342.5px;width:3px;height:3px;background:#2a6cb8;"></div>
<div class="t " style="left:161.8px;top:592.96px;font-size:7.6px;color:#444;">Shortcuts</div>
<svg style="left:198px;top:592.5px" width="9" height="9" viewBox="0 0 9 9"><circle cx="4.5" cy="4.5" r="3.9" fill="none" stroke="#555" stroke-width="0.9"/><path d="M4.5 3.8V6.8" stroke="#555" stroke-width="0.9"/><circle cx="4.5" cy="2.5" r="0.55" fill="#555"/></svg>
<svg style="left:0;top:0" width="960" height="673" viewBox="0 0 960 673"><g fill="none" stroke="#7a7a7a" stroke-width="1.2"><path d="M43 195H39.2Q38 195 38 193.8V183.8Q38 182.6 39.2 182.6H51.6Q52.8 182.6 52.8 183.8V193.8Q52.8 195 51.6 195H47.6"/><path d="M45.3 198.3V186.6M42 189.8L45.3 186.4L48.6 189.8"/><rect x="95.8" y="182.8" width="14.6" height="14.6" rx="1.2"/><path d="M98.4 187H105.4M100 190.1H106.4M101 193.2H107.8"/></g><g fill="none" stroke="#7f7f7f" stroke-width="1"><path d="M74.2 183.5V188M74.2 192.6V197.5M66.6 190.3H71.2M77.2 190.3H81.8"/><path d="M71.8 186L74.2 183.5L76.6 186M71.8 195L74.2 197.5L76.6 195M69.1 187.9L66.6 190.3L69.1 192.7M79.3 187.9L81.8 190.3L79.3 192.7"/></g><rect x="32.800000000000004" y="122.19999999999999" width="16.599999999999998" height="14.700000000000006" fill="#fff" stroke="#a0a0a0" stroke-width="1.1"/><rect x="34.800000000000004" y="124.80" width="1.5" height="0.9" fill="#4a80c8"/><rect x="37.2" y="124.80" width="9.799999999999997" height="0.7" fill="#c2c2c2"/><rect x="34.800000000000004" y="127.10" width="1.5" height="0.9" fill="#4a80c8"/><rect x="37.2" y="127.10" width="9.799999999999997" height="0.7" fill="#c2c2c2"/><rect x="34.800000000000004" y="129.40" width="1.5" height="0.9" fill="#4a80c8"/><rect x="37.2" y="129.40" width="9.799999999999997" height="0.7" fill="#c2c2c2"/><rect x="34.800000000000004" y="131.70" width="1.5" height="0.9" fill="#4a80c8"/><rect x="37.2" y="131.70" width="9.799999999999997" height="0.7" fill="#c2c2c2"/><rect x="34.800000000000004" y="134.00" width="1.5" height="0.9" fill="#4a80c8"/><rect x="37.2" y="134.00" width="9.799999999999997" height="0.7" fill="#c2c2c2"/><circle cx="35" cy="123.6" r="3.8" fill="#fff"/><circle cx="35" cy="123.6" r="1.9" fill="#fff" stroke="#eda84a" stroke-width="1.2"/><g stroke="#eda84a" stroke-width="0.9"><path d="M35 119.6V121.2M35 126V127.6M31 123.6H32.6M37.4 123.6H39M32.2 120.8L33.3 121.9M36.7 125.3L37.8 126.4M37.8 120.8L36.7 121.9M33.3 125.3L32.2 126.4"/></g><rect x="64.6" y="121.6" width="16.8" height="14.8" fill="#fff" stroke="#a0a0a0" stroke-width="1.1"/><rect x="66.6" y="124.20" width="1.5" height="0.9" fill="#4a80c8"/><rect x="69" y="124.20" width="10" height="0.7" fill="#c2c2c2"/><rect x="66.6" y="126.50" width="1.5" height="0.9" fill="#4a80c8"/><rect x="69" y="126.50" width="10" height="0.7" fill="#c2c2c2"/><rect x="66.6" y="128.80" width="1.5" height="0.9" fill="#4a80c8"/><rect x="69" y="128.80" width="10" height="0.7" fill="#c2c2c2"/><rect x="66.6" y="131.10" width="1.5" height="0.9" fill="#4a80c8"/><rect x="69" y="131.10" width="10" height="0.7" fill="#c2c2c2"/><rect x="66.6" y="133.40" width="1.5" height="0.9" fill="#4a80c8"/><rect x="69" y="133.40" width="10" height="0.7" fill="#c2c2c2"/><circle cx="77.7" cy="133.3" r="5.6" fill="#fff" stroke="#666" stroke-width="1.1"/><path d="M75 131.7H80.3M75 133.5H79.5M75 135.6H80.3" stroke="#777" stroke-width="0.8"/><rect x="92.8" y="121.6" width="16.099999999999998" height="14.399999999999995" fill="#fff" stroke="#a0a0a0" stroke-width="1.1"/><rect x="94.8" y="124.20" width="1.5" height="0.9" fill="#4a80c8"/><rect x="97.2" y="124.20" width="9.299999999999997" height="0.7" fill="#c2c2c2"/><rect x="94.8" y="126.50" width="1.5" height="0.9" fill="#4a80c8"/><rect x="97.2" y="126.50" width="9.299999999999997" height="0.7" fill="#c2c2c2"/><rect x="94.8" y="128.80" width="1.5" height="0.9" fill="#4a80c8"/><rect x="97.2" y="128.80" width="9.299999999999997" height="0.7" fill="#c2c2c2"/><rect x="94.8" y="131.10" width="1.5" height="0.9" fill="#4a80c8"/><rect x="97.2" y="131.10" width="9.299999999999997" height="0.7" fill="#c2c2c2"/><rect x="94.8" y="133.40" width="1.5" height="0.9" fill="#4a80c8"/><rect x="97.2" y="133.40" width="9.299999999999997" height="0.7" fill="#c2c2c2"/><path d="M100.6 138.2L102 134.6L109 127.6L111 129.6L104 136.6Z" fill="#2b5fa8"/><path d="M117.6 119.2H123.4L126 121.8V126.8H117.6Z" fill="#fff" stroke="#f1d9bc" stroke-width="0.9"/><path d="M119 118.2H124.6" stroke="#f1e2d0" stroke-width="0.7"/><circle cx="122.2" cy="123.4" r="2.4" fill="#fff" stroke="#b9b9b9" stroke-width="0.9"/><path d="M123.9 125.1L126 127.2" stroke="#a8a8a8" stroke-width="1"/><g opacity="0.75"><circle cx="119.4" cy="134.6" r="1.5" fill="#9db8dc"/><path d="M116.6 139.8Q116.8 136.6 119.4 136.6Q122 136.6 122.2 139.8Z" fill="#9db8dc"/><circle cx="124" cy="133.4" r="1.3" fill="#9ccdb0"/><path d="M121.8 137.6Q122 135.1 124 135.1Q126 135.1 126.2 137.6Z" fill="#9ccdb0"/><path d="M121 141.6L125.6 138.6" stroke="#f3c598" stroke-width="1.3"/><path d="M124.2 137.6L126.6 138L125.6 140.2Z" fill="#f3c598"/></g><path d="M117.6 148.6L126 156.2M126 148.6L117.6 156.2" stroke="#444" stroke-width="1.3"/><rect x="188" y="125.8" width="14.7" height="6.7" rx="0.6" fill="#2a5b94"/><path d="M189 119.3V127.3M185 123.3H193" stroke="#fff" stroke-width="3.6"/><path d="M189 119.3V127.3M185 123.3H193" stroke="#3b8a68" stroke-width="2"/><g stroke="#a8a8a8" stroke-width="0.9"><path d="M214.5 121.3H226M214.5 123.4H226M214.5 125.9H220.7M214.5 128.4H220"/></g><path d="M219.5 132.5H232.4M224.6 127.6L219.6 132.5L224.6 137.4" fill="none" stroke="#3b8a6a" stroke-width="2.2"/><g stroke="#a8a8a8" stroke-width="0.9"><path d="M247.4 121.3H259M247.4 123.4H259M253 125.9H259M253 128.4H259"/></g><path d="M242 132.5H254.9M249.9 127.6L254.9 132.5L249.9 137.4" fill="none" stroke="#3b8a6a" stroke-width="2.2"/><path d="M271.7 125V120.8M269.4 123L271.7 120.6L274 123" fill="none" stroke="#3b8a6a" stroke-width="1.4"/><path d="M271.7 134V138.8M269.4 136.6L271.7 139L274 136.6" fill="none" stroke="#3b8a6a" stroke-width="1.4"/><rect x="323.6" y="121.5" width="9" height="8.8" fill="#fff" stroke="#8a8a8a" stroke-width="1"/><path d="M328.1 122.8V128.8M325.1 125.8H331.1" stroke="#2c66b0" stroke-width="1.3"/><rect x="330.5" y="127.9" width="9.2" height="9.3" fill="#fff" stroke="#8a8a8a" stroke-width="1"/><path d="M332.4 132.5H338" stroke="#2c66b0" stroke-width="1.3"/><g stroke="#8f8f8f" stroke-width="0.9" fill="none"><path d="M355 121.4H370.5M355.7 120V122.8M362.6 120V122.8M369.6 120V122.8M355.7 121.4V131.4M369.6 121.4V128.2M355.7 126.2H369.6M355.7 131H359.5"/></g><rect x="361.9" y="133" width="11.9" height="5" fill="#2a5b94"/><path d="M362.5 128.2V135.6M358.8 131.9H366.2" stroke="#fff" stroke-width="3.4"/><path d="M362.5 128.2V135.6M358.8 131.9H366.2" stroke="#3b8a68" stroke-width="2"/><g opacity="0.5" fill="none" stroke="#b8b8b8" stroke-width="0.9"><path d="M384.5 121H393L397.5 125.5V137.5H384.5Z"/><path d="M393 121V125.5H397.5"/><path d="M386.5 127V119.8Q386.5 118.6 387.6 118.6Q388.7 118.6 388.7 119.8V126"/></g><rect x="411" y="121.7" width="16.6" height="14.2" fill="#fff" stroke="#8f8f8f" stroke-width="1.1"/><rect x="414.2" y="125" width="10.6" height="8.2" fill="none" stroke="#4d7fc0" stroke-width="0.9"/><path d="M416.5 123.8V126M419.5 123.8V126M422.5 123.8V126M416.5 127.5V131.5M418.6 127.5V131.5M420.7 127.5V131.5" stroke="#4d7fc0" stroke-width="0.9"/><circle cx="426.3" cy="134.4" r="4.6" fill="#fff"/><path d="M423.4 133.6A3 3 0 0 1 428.8 132.6M429.2 135.2A3 3 0 0 1 423.8 136.2" fill="none" stroke="#3a9a5c" stroke-width="1.5"/><path d="M429.9 130.8V133.5H427.2Z M422.7 138V135.3H425.4Z" fill="#3a9a5c"/><rect x="443" y="121.7" width="16.6" height="14.6" fill="#fff" stroke="#8f8f8f" stroke-width="1.1"/><rect x="446" y="125" width="10.6" height="8.2" fill="none" stroke="#4d7fc0" stroke-width="0.9"/><path d="M448.5 123.8V126M451.5 123.8V126M454.5 123.8V126M448.5 127.5V131.5M450.6 127.5V131.5" stroke="#4d7fc0" stroke-width="0.9"/><path d="M453 129.5H458.2M456.3 127.6L458.3 129.5L456.3 131.4" fill="none" stroke="#2b5fa8" stroke-width="1.2"/><path d="M484 120.8Q489.3 121 489.5 127.5V131L491.8 134H476.3L478.5 131V127.5Q478.7 121 484 120.8Z" fill="#ebb84c"/><path d="M481.6 134.8Q484 137.6 486.4 134.8Z" fill="#ebb84c"/><path d="M508.6 121.2H516.7L521.2 125.2V137.8H508.6Z" fill="#fff" stroke="#8a8a8a" stroke-width="1.1"/><path d="M516.7 121.2V125.2H521.2" fill="none" stroke="#8a8a8a" stroke-width="0.9"/><circle cx="514.6" cy="128.9" r="2.6" fill="#3f74c0"/><path d="M514.6 126.5V131.3M512.2 128.9H517.0" stroke="#a8c6ea" stroke-width="0.5"/><path d="M511.20000000000005 127.5L510.3 128.9L511.20000000000005 130.3M518.0 127.5L518.9 128.9L518.0 130.3" fill="none" stroke="#7a7a7a" stroke-width="0.7"/><rect x="510.8" y="133.20000000000002" width="4.8" height="0.8" fill="#b8b8b8"/><rect x="510.8" y="134.8" width="4.8" height="0.8" fill="#b8b8b8"/><path d="M515.8 132.8Q516.2 136.3 520.8 136.2" fill="none" stroke="#2b62b0" stroke-width="2.3"/><path d="M520.2 132.6L524.8 136.1L520.2 139.6Z" fill="#2b62b0"/><path d="M542.7 121.2H550.8L555.3 125.2V137.8H542.7Z" fill="#fff" stroke="#8a8a8a" stroke-width="1.1"/><path d="M550.8 121.2V125.2H555.3" fill="none" stroke="#8a8a8a" stroke-width="0.9"/><circle cx="548.7" cy="128.9" r="2.6" fill="#3f74c0"/><path d="M548.7 126.5V131.3M546.3000000000001 128.9H551.1" stroke="#a8c6ea" stroke-width="0.5"/><path d="M545.3000000000001 127.5L544.4000000000001 128.9L545.3000000000001 130.3M552.1 127.5L553.0 128.9L552.1 130.3" fill="none" stroke="#7a7a7a" stroke-width="0.7"/><rect x="544.9000000000001" y="133.20000000000002" width="4.8" height="0.8" fill="#b8b8b8"/><rect x="544.9000000000001" y="134.8" width="4.8" height="0.8" fill="#b8b8b8"/><path d="M553 138.4Q553 134.2 556.2 133" fill="none" stroke="#3a8a68" stroke-width="2.3"/><path d="M552.9 134.4L556.4 129.3L559.4 134.6Z" fill="#3a8a68"/><path d="M587.9 123.2A6.6 6.6 0 1 0 593.9 127" fill="none" stroke="#b3b3b3" stroke-width="1.6"/><path d="M586.9 120.5L590.8 123.2L586.9 125.9Z" fill="#b3b3b3"/><path d="M585 129.1L587.9 131.8L592.5 125.4" fill="none" stroke="#f09a8a" stroke-width="1.5"/><path d="M623.8 121.5H631.8L635.3 124.5V137.5H623.8Z" fill="#fff" stroke="#c4c4c4" stroke-width="1.1"/><path d="M631.8 121.5V124.5H635.3" fill="none" stroke="#c4c4c4" stroke-width="0.9"/><path d="M626.5 125.4L629.2 128.1L634.4 121.6" fill="none" stroke="#78a4da" stroke-width="1.4"/><path d="M627 131.2L631.6 135.8M631.6 131.2L627 135.8" stroke="#f2a092" stroke-width="1.3"/></svg>
</div>
<div class="r" style="left:25px;top:74px;width:906px;height:550px;background:transparent;box-sizing:border-box;border:1px solid #c4c4c4;border-top:none;border-radius:0 0 4px 4px;"></div>
<div class="r" style="left:25px;top:30px;width:906px;height:594px;background:transparent;border-radius:5px 5px 4px 4px;box-shadow:0 0 0 0.6px #6a6a6a;"></div>
</body></html>
